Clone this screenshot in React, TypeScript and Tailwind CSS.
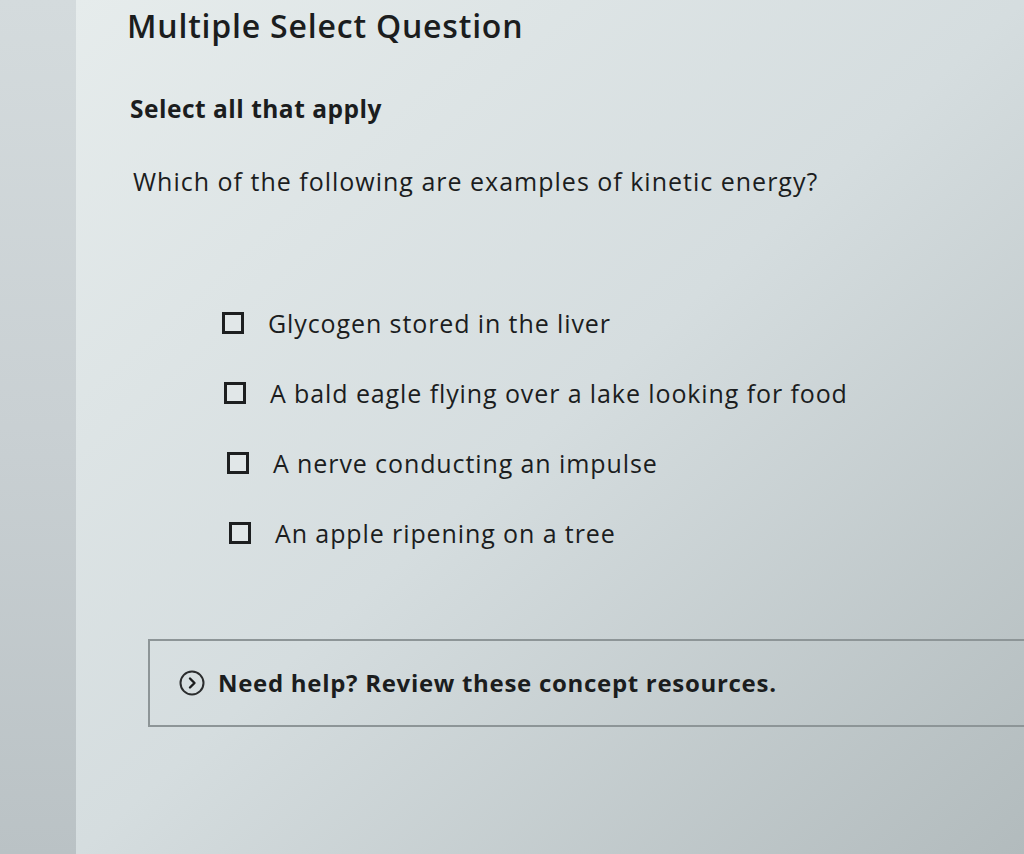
import React from "react";

const options = [
  { text: "Glycogen stored in the liver", cls: "ml-0" },
  { text: "A bald eagle flying over a lake looking for food", cls: "ml-[2px]" },
  { text: "A nerve conducting an impulse", cls: "ml-[5px]" },
  { text: "An apple ripening on a tree", cls: "ml-[7px]" },
];

export default function App() {
  return (
    <div
      className="flex h-[854px] w-[1024px] overflow-hidden text-[#1b1d1e]"
      style={{ fontFamily: "'Open Sans', Lato, Arial, sans-serif" }}
    >
      <div className="w-[76px] shrink-0 bg-gradient-to-b from-[#d4dbdd] via-[#c9d0d3] to-[#bac2c5]" />
      <main className="flex flex-1 flex-col bg-gradient-to-br from-[#e6ecec] via-[#d5dddf] to-[#b2bbbd] pl-[51px] pt-[6px]">
        <h1 className="text-[32px] font-semibold leading-[40px] tracking-[0.8px]">
          Multiple Select Question
        </h1>
        <p className="ml-[3px] mt-[48px] text-[24.5px] font-bold leading-[30px] tracking-[0.5px]">
          Select all that apply
        </p>
        <p className="ml-[6px] mt-[42px] text-[25px] leading-[30px] tracking-[1px]">
          Which of the following are examples of kinetic energy?
        </p>
        <ul className="mt-[112px] flex flex-col gap-[40px] pl-[95px]">
          {options.map((o) => (
            <li key={o.text} className={`flex h-[30px] items-center gap-[24px] ${o.cls}`}>
              <span className="h-[22px] w-[22px] shrink-0 border-[3px] border-[#1d1f20] bg-[#e1e7e8]" />
              <span className="text-[25px] leading-[30px] tracking-[0.9px]">{o.text}</span>
            </li>
          ))}
        </ul>
        <div className="ml-[21px] mt-[91px] flex h-[88px] items-center gap-[13px] border-y-2 border-l-2 border-[#8d9597] pl-[29px]">
          <svg width="26" height="26" viewBox="0 0 26 26" fill="none" className="shrink-0">
            <circle cx="13" cy="13" r="11.5" stroke="#2a2c2d" strokeWidth="2" />
            <path d="M11 8.5 L15.5 13 L11 17.5" stroke="#1b1d1e" strokeWidth="2.4" strokeLinecap="round" strokeLinejoin="round" />
          </svg>
          <span className="text-[24px] font-bold leading-[30px] tracking-[0.7px]">
            Need help? Review these concept resources.
          </span>
        </div>
      </main>
    </div>
  );
}
